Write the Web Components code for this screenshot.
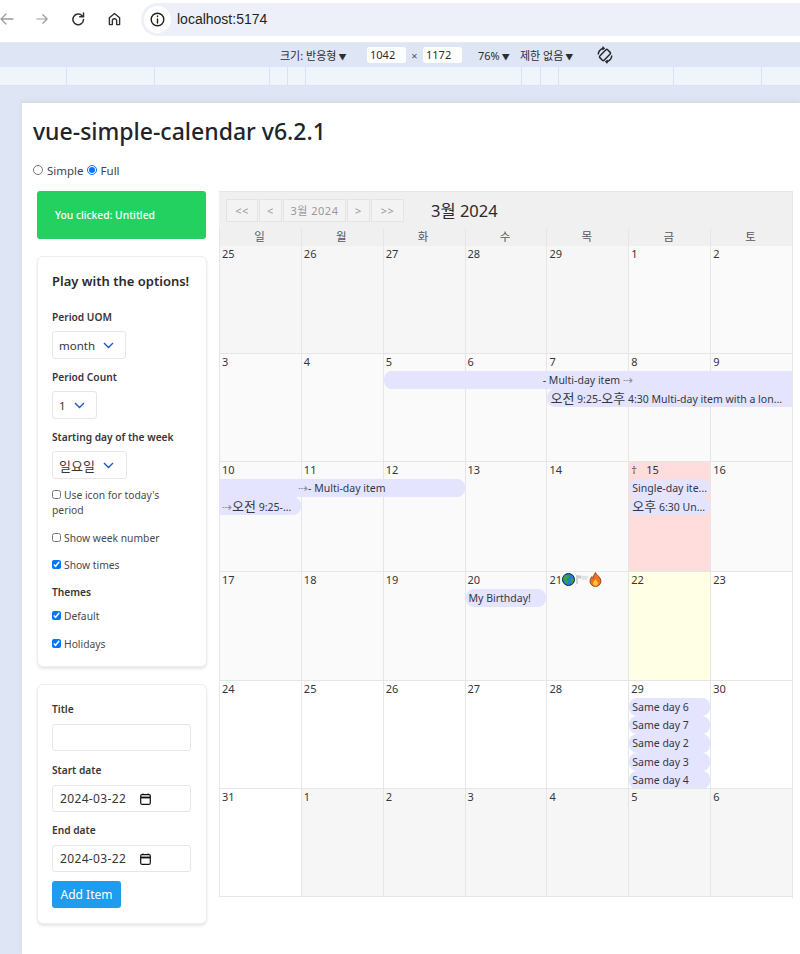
<!DOCTYPE html>
<html lang="ko">
<head>
<meta charset="utf-8">
<title>vue-simple-calendar</title>
<style>
  html, body { margin: 0; height: 954px; overflow: hidden; }
  body { background: #dee6f5; font-family: "Noto Sans", "Noto Sans CJK KR", sans-serif; color: #2c3e50; }
</style>
</head>
<body>
<browser-bar></browser-bar>
<device-toolbar></device-toolbar>
<device-ruler></device-ruler>
<demo-page>
  <alert-box slot="side">You clicked: Untitled</alert-box>
  <options-card slot="side"></options-card>
  <add-item-card slot="side"></add-item-card>
  <calendar-view slot="main"></calendar-view>
</demo-page>

<script>
class BrowserBar extends HTMLElement {
  constructor() {
    super();
    this.attachShadow({ mode: 'open' });
    this.shadowRoot.innerHTML = `
      <style>
        :host { display: flex; align-items: center; height: 43px; background: #fff; box-sizing: border-box; padding-bottom: 4px; border-bottom: 1px solid #e4e9f3; }
        .btn { width: 36px; display: flex; justify-content: center; flex: none; }
        .btn.first { width: 24px; justify-content: flex-start; }
        svg { display: block; fill: none; stroke-linecap: round; stroke-linejoin: round; }
        .pill { flex: 1; margin-left: 9px; height: 33px; background: #edf0f8; border-radius: 17px 0 0 17px; display: flex; align-items: center; padding-left: 3px; }
        .info { width: 27px; height: 27px; border-radius: 50%; background: #fff; display: flex; align-items: center; justify-content: center; }
        .url { margin-left: 6px; font: 14px "Liberation Sans", sans-serif; color: #1f1f1f; }
      </style>
      <div class="btn first"><svg width="14" height="14" viewBox="0 0 14 14" stroke="#9a9da3" stroke-width="1.300"><path d="M13 7H1M6 2L1 7l5 5"/></svg></div>
      <div class="btn"><svg width="12" height="12" viewBox="0 0 14 14" stroke="#9a9da3" stroke-width="1.400"><path d="M1 7h12M8 2l5 5-5 5"/></svg></div>
      <div class="btn"><svg width="14" height="14" viewBox="0 0 14 14" stroke="#2c2f33" stroke-width="1.500"><path d="M12.500 1v3.800H8.700M12.500 7.500a5.300 5.300 0 1 1-1.400-3.700l1.400 1"/></svg></div>
      <div class="btn"><svg width="13" height="14" viewBox="0 0 14 15" stroke="#2c2f33" stroke-width="1.500"><path d="M1.500 6.200L7 1.500l5.500 4.700v7.300H9.300V9.500a2.300 2.300 0 0 0-4.600 0v4H1.500z"/></svg></div>
      <div class="pill">
        <div class="info"><svg width="15" height="15" viewBox="0 0 15 15" stroke="#1f1f1f" stroke-width="1.400"><circle cx="7.500" cy="7.500" r="6.300"/><path d="M7.500 7v4M7.500 4v.6"/></svg></div>
        <span class="url">localhost:5174</span>
      </div>`;
  }
}
customElements.define('browser-bar', BrowserBar);

class DeviceToolbar extends HTMLElement {
  constructor() {
    super();
    this.attachShadow({ mode: 'open' });
    this.shadowRoot.innerHTML = `
      <style>
        :host { display: flex; align-items: center; height: 24px; background: #dee6f6; padding-left: 280px; font: 11px "Noto Sans", "Noto Sans CJK KR", sans-serif; color: #2b2d31; white-space: nowrap; }
        .arrow { font-size: 8px; margin-left: 2px; }
        .size { width: 39px; height: 16px; background: #fff; border-radius: 3px; box-sizing: border-box; padding-left: 3px; line-height: 16px; }
        .x { width: 17px; text-align: center; color: #555; }
        svg { display: block; }
      </style>
      <span style="width:87px">크기: 반응형<span class="arrow">▼</span></span>
      <span class="size">1042</span><span class="x">×</span><span class="size">1172</span>
      <span style="margin-left:16px;width:42px">76%<span class="arrow">▼</span></span>
      <span style="width:76px">제한 없음<span class="arrow">▼</span></span>
      <svg width="18" height="18" viewBox="0 0 18 18" fill="none" stroke="#26292e" stroke-width="1.500"><rect x="6" y="3.500" width="6" height="11" rx="1.200" transform="rotate(45 9 9)"/><path d="M2.200 8.500a7 7 0 0 1 5.300-6.200M15.800 9.500a7 7 0 0 1-5.300 6.200"/><path d="M6.500.8l1.500 1.500-1.800 1.300M11.500 17.200L10 15.700l1.800-1.300"/></svg>`;
  }
}
customElements.define('device-toolbar', DeviceToolbar);

class DeviceRuler extends HTMLElement {
  constructor() {
    super();
    this.attachShadow({ mode: 'open' });
    const stops = [67, 155, 270, 288, 306, 522, 541, 559, 674, 762];
    let prev = 0;
    const cells = stops.map(x => {
      const w = x - prev;
      prev = x;
      return `<i style="width:${w}px"></i>`;
    }).join('');
    this.shadowRoot.innerHTML = `
      <style>
        :host { display: flex; height: 18px; background: #f0f4fb; border-bottom: 1px solid #d9e3f5; box-sizing: content-box; }
        i { display: block; box-sizing: border-box; border-right: 1px solid #d6e2f7; }
      </style>${cells}`;
  }
}
customElements.define('device-ruler', DeviceRuler);

class DemoPage extends HTMLElement {
  constructor() {
    super();
    this.attachShadow({ mode: 'open' });
    this.shadowRoot.innerHTML = `
      <style>
        :host { display: block; margin: 17px 0 0 22px; background: #fff; height: 851px; box-sizing: border-box; padding: 11px 8px 0 11px; box-shadow: 0 -2px 4px rgba(120,130,160,.12); }
        h1 { margin: 0; font-size: 23px; line-height: 34px; font-weight: 500; color: #212529; }
        .mode { display: flex; align-items: center; height: 18px; margin-top: 13px; font-size: 11.500px; color: #3c4650; }
        input { margin: 0 4px 0 0; width: 10px; height: 10px; }
        label { display: flex; align-items: center; margin-right: 3px; }
        .cols { display: flex; margin-top: 12px; padding-left: 4px; }
        .side { width: 170px; flex: none; margin-right: 12px; display: flex; flex-direction: column; }
        .main { flex: 1; min-width: 0; }
      </style>
      <h1>vue-simple-calendar v6.2.1</h1>
      <div class="mode">
        <label><input type="radio" name="m">Simple</label>
        <label><input type="radio" name="m" checked>Full</label>
      </div>
      <div class="cols">
        <div class="side"><slot name="side"></slot></div>
        <div class="main"><slot name="main"></slot></div>
      </div>`;
  }
}
customElements.define('demo-page', DemoPage);

class AlertBox extends HTMLElement {
  constructor() {
    super();
    this.attachShadow({ mode: 'open' });
    this.shadowRoot.innerHTML = `
      <style>
        :host { display: flex; align-items: center; height: 48px; width: 169px; box-sizing: border-box; padding-left: 18px; background: #23d160; border-radius: 3px; color: #fff; font-size: 10.300px; font-weight: 500; margin-bottom: 17px; }
      </style><slot></slot>`;
  }
}
customElements.define('alert-box', AlertBox);

const cardStyle = `
  :host { display: block; width: 170px; box-sizing: border-box; background: #fff; border-radius: 6px; border: 1px solid #eceef1; box-shadow: 0 2px 3px rgba(10,10,10,.1); color: #363636; font-size: 10.300px; }
  .lab { display: block; font-weight: 600; color: #363636; font-size: 10.200px; line-height: 14px; }
  .sel { display: inline-flex; align-items: center; box-sizing: border-box; height: 28px; border: 1px solid #e6e6e6; border-radius: 3px; padding-left: 6px; font-size: 11.500px; color: #363636; }
  .sel svg { margin-left: 8px; }
`;
const chevron = `<svg width="11" height="7" viewBox="0 0 11 7" fill="none" stroke="#1c58c8" stroke-width="1.400"><path d="M1 1l4.500 4.500L10 1"/></svg>`;

class OptionsCard extends HTMLElement {
  constructor() {
    super();
    this.attachShadow({ mode: 'open' });
    this.shadowRoot.innerHTML = `
      <style>${cardStyle}
        :host { height: 411px; padding: 14px 14px 0; margin-bottom: 17px; }
        h2 { margin: 0; font-size: 13px; font-weight: 600; line-height: 20px; color: #2b2b2b; white-space: nowrap; }
        .chk { display: block; color: #4a4a4a; line-height: 15px; }
        .chk input { margin: 0 3px 0 0; width: 9px; height: 9px; vertical-align: 0; }
      </style>
      <h2>Play with the options!</h2>
      <span class="lab" style="margin-top:19px">Period UOM</span>
      <div class="sel" style="width:74px;margin-top:7px">month ${chevron}</div>
      <span class="lab" style="margin-top:11px">Period Count</span>
      <div class="sel" style="width:45px;margin-top:7px">1 ${chevron}</div>
      <span class="lab" style="margin-top:11px">Starting day of the week</span>
      <div class="sel" style="width:75px;margin-top:7px"><span style="font-size:13px">일요일</span> ${chevron}</div>
      <label class="chk" style="margin-top:9px"><input type="checkbox">Use icon for today's period</label>
      <label class="chk" style="margin-top:13px"><input type="checkbox">Show week number</label>
      <label class="chk" style="margin-top:12px"><input type="checkbox" checked>Show times</label>
      <span class="lab" style="margin-top:12px">Themes</span>
      <label class="chk" style="margin-top:9.500px"><input type="checkbox" checked>Default</label>
      <label class="chk" style="margin-top:13px"><input type="checkbox" checked>Holidays</label>`;
  }
}
customElements.define('options-card', OptionsCard);

class DateField extends HTMLElement {
  constructor() {
    super();
    this.attachShadow({ mode: 'open' });
    this.shadowRoot.innerHTML = `
      <style>
        :host { display: flex; align-items: center; justify-content: space-between; box-sizing: border-box; width: 139px; height: 27px; border: 1px solid #e6e6e6; border-radius: 3px; padding: 0 39px 0 7px; margin-top: 8px; font-size: 12px; letter-spacing: .35px; color: #363636; }
        svg { display: block; flex: none; }
      </style>
      <slot></slot>
      <svg width="11" height="12" viewBox="0 0 11 12" fill="none" stroke="#111" stroke-width="1.200"><rect x=".7" y="1.700" width="9.600" height="9.600" rx="1.200"/><path d="M.7 4.500h9.600" stroke-width="1.800"/><path d="M3 .5v1.500M8 .5v1.500"/></svg>`;
  }
}
customElements.define('date-field', DateField);

class AddItemCard extends HTMLElement {
  constructor() {
    super();
    this.attachShadow({ mode: 'open' });
    this.shadowRoot.innerHTML = `
      <style>${cardStyle}
        :host { height: 240px; padding: 17px 14px 0; }
        input { display: block; box-sizing: border-box; width: 139px; height: 27px; border: 1px solid #e6e6e6; border-radius: 3px; padding: 0 7px; margin-top: 8px; font: 12px "Noto Sans", sans-serif; color: #363636; outline: none; background: #fff; }
        .lab { margin-top: 12px; }
        .lab:first-of-type { margin-top: 0; }
        button { display: block; margin-top: 9px; width: 69px; height: 27px; border: 0; border-radius: 3px; background: #209cee; color: #fff; font: 12px "Noto Sans", sans-serif; padding: 0; }
      </style>
      <span class="lab">Title</span><input type="text">
      <span class="lab">Start date</span><date-field>2024-03-22</date-field>
      <span class="lab" style="margin-top:11px">End date</span><date-field>2024-03-22</date-field>
      <button>Add Item</button>`;
  }
}
customElements.define('add-item-card', AddItemCard);

class CalDay extends HTMLElement {
  constructor() {
    super();
    this.attachShadow({ mode: 'open' });
    this.shadowRoot.innerHTML = `
      <style>
        :host { display: block; grid-row: 1 / -1; box-sizing: border-box; border-left: 1px solid #e6e6e6; padding: 0 0 0 2px; font-size: 11px; line-height: 15px; color: #363636; min-width: 0; }
        :host([tone=out]) { background: #f6f6f6; }
        :host([tone=past]) { background: #fafafa; }
        :host([tone=today]) { background: #ffffe6; }
        :host([tone=holiday]) { background: #ffdddd; }
        .badge { display: flex; align-items: center; }
        svg { display: block; }
      </style>
      <div class="badge"><slot></slot></div>`;
  }
  connectedCallback() {
    this.style.gridColumn = this.getAttribute('col');
  }
}
customElements.define('cal-day', CalDay);

class CalItem extends HTMLElement {
  constructor() {
    super();
    this.attachShadow({ mode: 'open' });
    this.shadowRoot.innerHTML = `
      <style>
        :host { display: block; box-sizing: border-box; min-width: 0; height: 18.400px; line-height: 18px; padding: 0 3px 0 3px; background: #e4e4ff; color: #33383f; font-size: 10.500px; border-radius: 8px; white-space: nowrap; overflow: hidden; text-overflow: ellipsis; margin-left: 1px; }
        :host([center]) { text-align: center; }
        :host([cont-end]) { border-top-right-radius: 0; border-bottom-right-radius: 0; }
        :host([cont-start]) { border-top-left-radius: 0; border-bottom-left-radius: 0; margin-left: 0; }
      </style><slot></slot>`;
  }
  connectedCallback() {
    this.style.gridColumn = this.getAttribute('col');
    this.style.gridRow = this.getAttribute('row');
  }
}
customElements.define('cal-item', CalItem);

class CalWeek extends HTMLElement {
  constructor() {
    super();
    this.attachShadow({ mode: 'open' });
    this.shadowRoot.innerHTML = `
      <style>
        :host { display: grid; flex: none; grid-template-columns: repeat(7, 1fr); grid-template-rows: 16.500px repeat(5, 18.400px) 1fr; box-sizing: border-box; border-bottom: 1px solid #e6e6e6; overflow: hidden; }
      </style><slot></slot>`;
  }
  connectedCallback() {
    this.style.height = this.getAttribute('h') + 'px';
  }
}
customElements.define('cal-week', CalWeek);

const ko = s => `<span style="font-size:13px">${s}</span>`;
const arrow = `<span style="color:#8a8f98;font-size:12px;font-family:'DejaVu Sans'">⇢</span>`;
const globe = `<svg width="13" height="13" viewBox="0 0 13 13"><circle cx="6.500" cy="6.500" r="6" fill="#1f7fd1" stroke="#123"/><path d="M3 2.500c2-1 3.500-.5 4 .8S5 5 5 6.500s1.500 1.500 1 3-2 1-2.500 0S2 6 1.500 5.500 2 3 3 2.500zM8.500 6c1-.8 2.500-.5 3 .5s-.5 3-1.500 3.500-1.500-3-1.500-4z" fill="#3aa53a"/></svg>`;
const flag = `<svg width="13" height="11" viewBox="0 0 13 11" fill="none" style="margin-left:1px"><path d="M1 1v9" stroke="#aaa"/><path d="M1.500 1.500h4v3h-4z" fill="#ccc"/><path d="M6 3h6M6 5h5" stroke="#ccc"/></svg>`;
const fire = `<svg width="13" height="15" viewBox="0 0 13 15"><path d="M6.500.500c.5 2.500 5.500 4.500 5.500 8.500a5.500 5.500 0 0 1-11 0c0-2 1-3.500 2-4.500 0 1.500.7 2 1.300 2C4 4.500 5 2.500 6.500.500z" fill="#f4711e" stroke="#6b2a08" stroke-width=".7"/><path d="M6.500 7c.3 1.500 2.500 2.500 2.500 4.300a2.500 2.500 0 0 1-5 0C4 9.500 6 8.500 6.500 7z" fill="#fdc72e"/></svg>`;

const weeks = [
  { h: 108, days: [[25,'out'],[26,'out'],[27,'out'],[28,'out'],[29,'out'],[1,'past'],[2,'past']], items: [] },
  { h: 108, days: [[3,'past'],[4,'past'],[5,'past'],[6,'past'],[7,'past'],[8,'past'],[9,'past']], items: [
    { col: '3 / 8', row: 2, html: `- Multi-day item ${arrow}`, attrs: 'center cont-end' },
    { col: '5 / 8', row: 3, html: `${ko('오전')} 9:25-${ko('오후')} 4:30 Multi-day item with a lon...`, attrs: 'cont-end' }
  ] },
  { h: 110, days: [[10,'past'],[11,'past'],[12,'past'],[13,'past'],[14,'past'],['<span style="width:15px;color:#7a4a2a">†</span>15','holiday'],[16,'past']], items: [
    { col: '1 / 4', row: 2, html: `${arrow}- Multi-day item`, attrs: 'center cont-start' },
    { col: '1 / 2', row: 3, html: `${arrow}${ko('오전')} 9:25-...`, attrs: 'cont-start' },
    { col: '6 / 7', row: 2, html: 'Single-day ite...' },
    { col: '6 / 7', row: 3, html: `${ko('오후')} 6:30 Un...` }
  ] },
  { h: 109, days: [[17,'past'],[18,'past'],[19,'past'],[20,'past'],[`21${globe}${flag}${fire}`,'past'],[22,'today'],[23,'']], items: [
    { col: '4 / 5', row: 2, html: 'My Birthday!' }
  ] },
  { h: 108, days: [[24,''],[25,''],[26,''],[27,''],[28,''],[29,''],[30,'']], items: [6,7,2,3,4].map((n, i) => ({ col: '6 / 7', row: i + 2, html: `Same day ${n}` })) },
  { h: 108, days: [[31,''],[1,'out'],[2,'out'],[3,'out'],[4,'out'],[5,'out'],[6,'out']], items: [] }
];

class CalendarView extends HTMLElement {
  constructor() {
    super();
    this.attachShadow({ mode: 'open' });
    const heads = ['일','월','화','수','목','금','토'].map(d => `<div>${d}</div>`).join('');
    const body = weeks.map(w => {
      const days = w.days.map((d, i) => `<cal-day col="${i + 1}" tone="${d[1]}">${d[0]}</cal-day>`).join('');
      const items = w.items.map(it => `<cal-item col="${it.col}" row="${it.row}" ${it.attrs || ''}>${it.html}</cal-item>`).join('');
      return `<cal-week h="${w.h}">${days}${items}</cal-week>`;
    }).join('');
    this.shadowRoot.innerHTML = `
      <style>
        :host { display: flex; flex-direction: column; height: 707px; width: 574px; box-sizing: border-box; border-top: 1px solid #e6e6e6; border-right: 1px solid #e6e6e6; }
        .top { display: flex; align-items: center; height: 36px; background: #f0f0f0; padding-left: 7px; flex: none; }
        .nav { display: flex; }
        .nav span { box-sizing: border-box; height: 23px; line-height: 21px; border: 1px solid #e4e4e4; background: #f3f3f3; color: #999; font-size: 11px; text-align: center; margin-right: 1px; letter-spacing: .5px; }
        h3 { margin: 0 0 0 26px; font-size: 16.500px; font-weight: 400; color: #2b2b2b; }
        .heads { display: grid; grid-template-columns: repeat(7, 1fr); height: 18px; flex: none; background: #f0f0f0; font-size: 11.500px; line-height: 17px; color: #55585c; text-align: center; }
        .heads div { border-left: 1px solid #e6e6e6; padding-right: 2px; }
        .weeks { flex: 1; display: flex; flex-direction: column; min-height: 0; }
      </style>
      <div class="top">
        <div class="nav">
          <span style="width:32px">&lt;&lt;</span><span style="width:23px">&lt;</span><span style="width:63px">3월 2024</span><span style="width:23px">&gt;</span><span style="width:33px">&gt;&gt;</span>
        </div>
        <h3>3월 2024</h3>
      </div>
      <div class="heads">${heads}</div>
      <div class="weeks">${body}</div>`;
  }
}
customElements.define('calendar-view', CalendarView);
</script>
</body>
</html>
